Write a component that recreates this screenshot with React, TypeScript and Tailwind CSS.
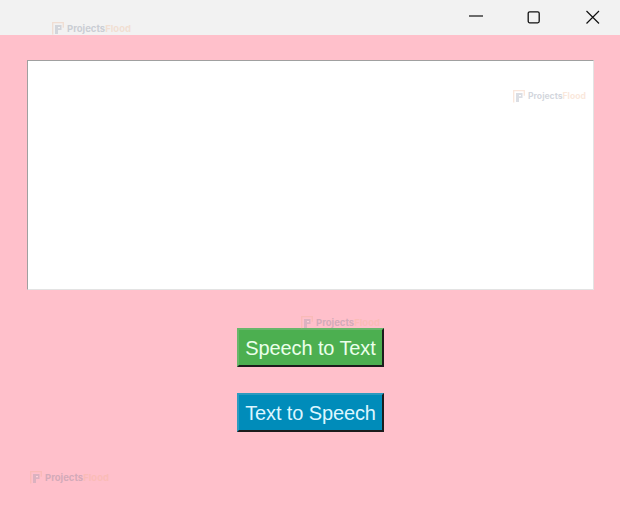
function Watermark({ className, textSize = 'text-[9.5px]' }: { className: string; textSize?: string }) {
  return (
    <div className={`absolute flex items-center gap-[3px] opacity-30 ${className}`}>
      <svg width="12" height="13" viewBox="0 0 12 13" fill="none">
        <path d="M.7 12.5V.7h10.6v5" stroke="#eeb08a" strokeWidth="1.3" />
        <path d="M3 12V3h6.5v5H6v4z" fill="#8a94a8" />
        <path d="M6 5h2v1.200H6z" fill="#fff" />
      </svg>
      <span className={`${textSize} leading-none font-bold font-['Inter',sans-serif] text-[#6f7a90]`}>
        Projects<span className="text-[#f0b48c]">Flood</span>
      </span>
    </div>
  );
}

function ActionButton({ label, color }: { label: string; color: string }) {
  return (
    <button
      className={`flex h-[39px] w-[147px] items-center justify-center border-2 border-t-[#d8d8d8]/20 border-l-[#d8d8d8]/20 border-r-[#1c1c1c] border-b-[#1c1c1c] text-[20px] tracking-[-0.12px] font-['Liberation_Sans',Arial,sans-serif] ${color}`}
    >
      {label}
    </button>
  );
}

export default function App() {
  return (
    <div className="relative h-[532px] w-[620px] overflow-hidden bg-[#ffc0cb]">
      <div className="flex h-[35px] items-center justify-end gap-[42px] bg-[#f2f2f2] pr-[19px]">
        <svg width="16" height="16" viewBox="0 0 16 16" fill="none" stroke="#111" strokeWidth="1.2">
          <path d="M1 6h14" />
        </svg>
        <svg width="16" height="16" viewBox="0 0 16 16" fill="none" stroke="#111" strokeWidth="1.300">
          <rect x="2.200" y="1.800" width="11" height="11" rx="1.500" />
        </svg>
        <svg width="16" height="16" viewBox="0 0 16 16" fill="none" stroke="#111" strokeWidth="1.200" className="ml-px">
          <path d="M1.500 1 14 13.500M14 1 1.500 13.500" />
        </svg>
      </div>

      <div className="flex flex-col pt-[25px]">
        <textarea className="ml-[27px] h-[230px] w-[567px] resize-none border border-t-[#a0a0a0] border-l-[#a0a0a0] border-b-[#e3e3e3] border-r-[#e3e3e3] bg-white outline-none" />
        <div className="mt-[38px] flex flex-col items-center gap-[26px] pl-px">
          <ActionButton label="Speech to Text" color="bg-[#4caf50] text-[#eaffea]" />
          <ActionButton label="Text to Speech" color="bg-[#008cba] text-[#dcf6ff]" />
        </div>
      </div>

      <Watermark className="left-[52px] top-[22px]" />
      <Watermark className="left-[513px] top-[90px]" textSize="text-[8.6px]" />
      <Watermark className="left-[301px] top-[316px]" />
      <Watermark className="left-[30px] top-[471px]" />
    </div>
  );
}
